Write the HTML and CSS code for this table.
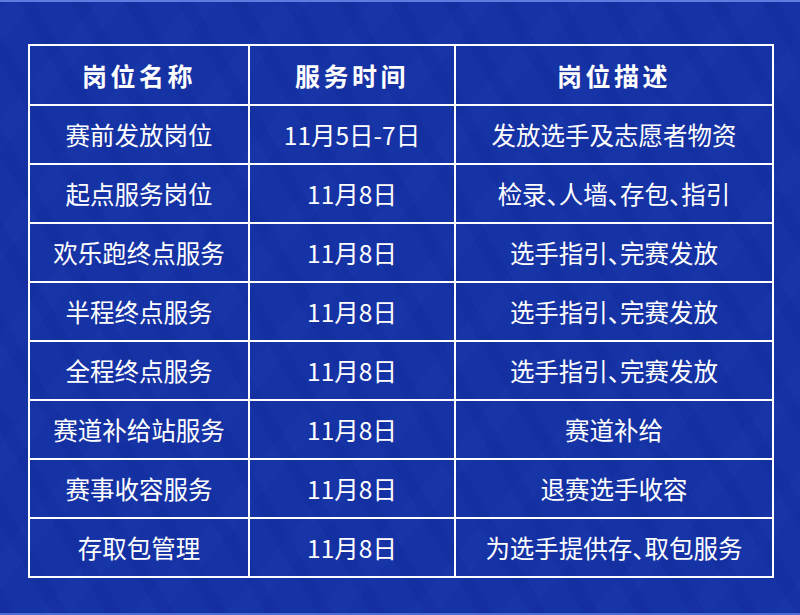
FILE: index.html
```html
<!DOCTYPE html>
<html lang="zh">
<head>
<meta charset="utf-8">
<link rel="stylesheet" href="styles.css">
</head>
<body>
<div class="page">
  <table class="jobs">
    <colgroup>
      <col class="c1"><col class="c2"><col class="c3">
    </colgroup>
    <thead>
      <tr><th>岗位名称</th><th>服务时间</th><th>岗位描述</th></tr>
    </thead>
    <tbody>
      <tr><td>赛前发放岗位</td><td>11月5日-7日</td><td>发放选手及志愿者物资</td></tr>
      <tr><td>起点服务岗位</td><td>11月8日</td><td>检录、人墙、存包、指引</td></tr>
      <tr><td>欢乐跑终点服务</td><td>11月8日</td><td>选手指引、完赛发放</td></tr>
      <tr><td>半程终点服务</td><td>11月8日</td><td>选手指引、完赛发放</td></tr>
      <tr><td>全程终点服务</td><td>11月8日</td><td>选手指引、完赛发放</td></tr>
      <tr><td>赛道补给站服务</td><td>11月8日</td><td>赛道补给</td></tr>
      <tr><td>赛事收容服务</td><td>11月8日</td><td>退赛选手收容</td></tr>
      <tr><td>存取包管理</td><td>11月8日</td><td>为选手提供存、取包服务</td></tr>
    </tbody>
  </table>
</div>
</body>
</html>
```

FILE: styles.css
```css
html, body {
  margin: 0;
  padding: 0;
}
body {
  width: 800px;
  height: 615px;
  overflow: hidden;
  background-color: #1633a5;
  background-image:
    repeating-linear-gradient(60deg, rgba(10, 30, 140, 0.18) 0 14px, rgba(0, 0, 0, 0) 14px 46px),
    repeating-linear-gradient(-50deg, rgba(40, 70, 190, 0.1) 0 22px, rgba(0, 0, 0, 0) 22px 70px);
  font-family: "Noto Sans CJK SC", "Noto Sans", sans-serif;
  color: #fff;
}
.page {
  box-sizing: border-box;
  height: 615px;
  padding: 44px 28px 0;
  border-top: 2px solid #5d7ce0;
  border-bottom: 2px solid #4a6ad6;
}
.jobs {
  margin-top: -2px;
  width: 744px;
  border-collapse: collapse;
  table-layout: fixed;
}
.c1 { width: 220px; }
.c2 { width: 206px; }
.c3 { width: 318px; }
.jobs th,
.jobs td {
  border: 2px solid #ffffff;
  text-align: center;
  vertical-align: middle;
  padding: 0;
  white-space: nowrap;
}
.jobs th {
  height: 58px;
  font-size: 25px;
  font-weight: 700;
  letter-spacing: 3.5px;
}
.jobs td {
  height: 57px;
  font-size: 24.5px;
  font-weight: 400;
  font-feature-settings: "halt";
}
```
